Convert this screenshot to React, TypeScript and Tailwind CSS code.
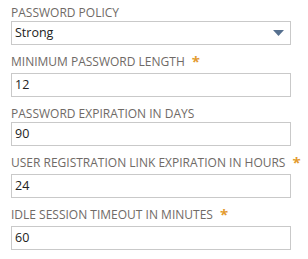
import React from "react";

function Label({ text, required }: { text: string; required?: boolean }) {
  return (
    <div className={`flex items-start h-[17px] leading-[17px] text-[12px] text-[#6f6a66] whitespace-nowrap ${required ? "mb-[3px]" : ""}`}>
      <span>{text}</span>
      {required && <span className="ml-[7px] text-[#e39b2f] font-bold text-[15px] leading-[17px]">*</span>}
    </div>
  );
}

function Input({ value }: { value: string }) {
  return (
    <div className="h-[24px] w-[280px] border border-[#c9c9c9] bg-white flex items-center pl-[3px] text-[12.5px] text-[#222]">
      {value}
    </div>
  );
}

export default function App() {
  return (
    <div className="w-[308px] h-[259px] bg-white pl-[11px] pt-[4px]" style={{ fontFamily: '"Open Sans", sans-serif' }}>
      <Label text="PASSWORD POLICY" />
      <div className="h-[24px] w-[280px] border border-[#c9c9c9] bg-white flex items-center justify-between pl-[3px] pr-[6px] text-[12.5px] text-[#222]">
        <span>Strong</span>
        <svg width="11" height="6" viewBox="0 0 11 6">
          <polygon points="0,0 11,0 5.5,6" fill="#56708f" />
        </svg>
      </div>
      <div className="mt-[8px]">
        <Label text="MINIMUM PASSWORD LENGTH" required />
        <Input value="12" />
      </div>
      <div className="mt-[8px]">
        <Label text="PASSWORD EXPIRATION IN DAYS" />
        <Input value="90" />
      </div>
      <div className="mt-[8px]">
        <Label text="USER REGISTRATION LINK EXPIRATION IN HOURS" required />
        <Input value="24" />
      </div>
      <div className="mt-[8px]">
        <Label text="IDLE SESSION TIMEOUT IN MINUTES" required />
        <Input value="60" />
      </div>
    </div>
  );
}
